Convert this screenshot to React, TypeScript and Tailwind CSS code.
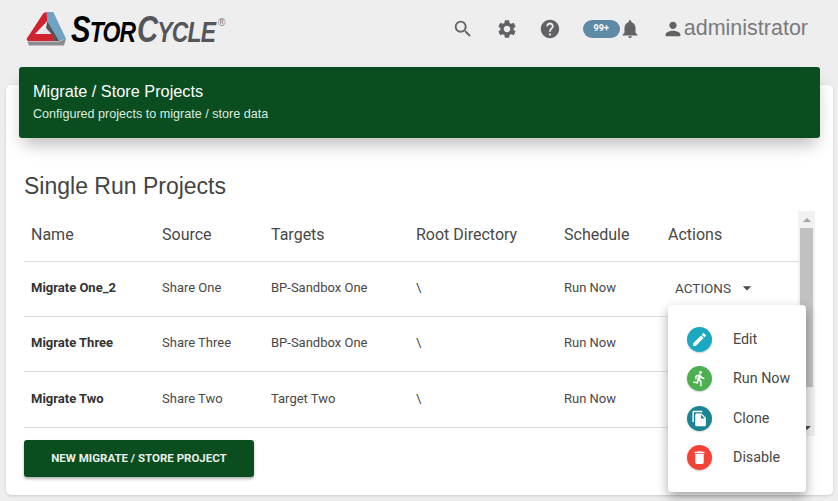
import {
  MdArrowDropDown,
  MdDelete,
  MdDirectionsRun,
  MdEdit,
  MdFileCopy,
  MdHelp,
  MdNotifications,
  MdPerson,
  MdSearch,
  MdSettings,
} from "react-icons/md";

const COLS = "grid grid-cols-[131px_109px_145px_148px_104px_1fr] items-center pl-[7px]";

const ROWS = [
  { name: "Migrate One_2", source: "Share One", target: "BP-Sandbox One", h: "h-[55px]" },
  { name: "Migrate Three", source: "Share Three", target: "BP-Sandbox One", h: "h-[55px]" },
  { name: "Migrate Two", source: "Share Two", target: "Target Two", h: "h-[56px]" },
];

const MENU = [
  { label: "Edit", icon: MdEdit, bg: "bg-[#1ba9c1]" },
  { label: "Run Now", icon: MdDirectionsRun, bg: "bg-[#4caf50]" },
  { label: "Clone", icon: MdFileCopy, bg: "bg-[#1b8494]" },
  { label: "Disable", icon: MdDelete, bg: "bg-[#f44336]" },
];

function Logo() {
  return (
    <div className="flex items-center">
      <svg width="42" height="36" viewBox="0 0 42 36" className="shrink-0">
        <path d="M20.7 1 L27.3 1 L40 27.7 L33.3 30 L21.3 10 Z" fill="#6fa3c4" />
        <path d="M21.3 10 L33.3 30 L28 30 L20 17 Z" fill="#55555a" />
        <path d="M20 17 L25.5 23 L14 23 Z" fill="#e4e4e4" />
        <path d="M17.5 2 L20.7 1 L21.3 10 L9 23 L26 23 L28 30 L2 30 L0.5 28 Z" fill="#d1232f" />
        <path d="M0.5 28 L3 34.5 L38 34.5 L40 27.7 L33.3 30.5 L2 30.5 Z" fill="#8b8b8f" />
      </svg>
      <div className="ml-[3px] w-[147px]">
        <span className="flex origin-left scale-x-[0.79] items-baseline font-bold italic leading-none tracking-[-1px] [font-family:'Liberation_Sans',sans-serif] whitespace-nowrap">
          <span className="text-[37px] text-black">S</span>
          <span className="text-[29px] text-black">TOR</span>
          <span className="ml-[2px] text-[37px] text-[#55565a]">C</span>
          <span className="text-[29px] text-[#55565a]">YCLE</span>
        </span>
      </div>
      <span className="mb-[14px] text-[10px] text-[#777] [font-family:'Liberation_Sans',sans-serif]">®</span>
    </div>
  );
}

function Header() {
  return (
    <div className="flex h-[67px] items-center pl-[26px] pr-[30px] pb-[9px] text-[#616166]">
      <Logo />
      <div className="ml-auto flex items-center">
        <MdSearch size={22} />
        <MdSettings size={22} className="ml-[22px]" />
        <MdHelp size={22} className="ml-[21px]" />
        <span className="ml-[22px] flex h-[18px] w-[37px] items-center justify-center rounded-full bg-[#5f8aa6] text-[9px] font-bold text-white">
          99+
        </span>
        <MdNotifications size={22} className="-mx-px" />
        <MdPerson size={22} className="ml-[22px]" />
        <span className="text-[21.5px] leading-none text-[#7a7a7e] [font-family:'Liberation_Sans',sans-serif]">administrator</span>
      </div>
    </div>
  );
}

export default function App() {
  return (
    <div className="h-[501px] w-[838px] overflow-hidden bg-[#eeeeee] font-['Roboto',sans-serif]">
      <Header />
      <div className="relative mx-[6px] mt-[18px] flex h-[410px] w-[827px] flex-col rounded-[5px] bg-white shadow-[0_1px_3px_rgba(0,0,0,0.15)]">
        <div className="relative z-10 mx-[13px] -mt-[18px] h-[71px] rounded-[3px] bg-[#0a4d1f] px-[14px] pt-[14px] shadow-[0_10px_16px_-4px_rgba(0,0,0,0.28)]">
          <div className="text-[16.3px] leading-[21px] text-white [font-family:'Liberation_Sans',sans-serif]">Migrate / Store Projects</div>
          <div className="mt-[4px] text-[12.6px] leading-[16px] text-[#dcebe0] [font-family:'Liberation_Sans',sans-serif]">Configured projects to migrate / store data</div>
        </div>
        <div className="px-[18px]">
          <h1 className="mt-[33px] text-[23px] leading-[30px] text-[#444] [font-family:'Liberation_Sans',sans-serif]">Single Run Projects</h1>
          <div className="mt-[10px] flex items-start">
            <div className="-mt-[4px] w-[774px]">
              <div className={`${COLS} h-[55px] border-b border-[#dddddd] pt-[2px] text-[16px] text-[#484848]`}>
                <span>Name</span>
                <span>Source</span>
                <span>Targets</span>
                <span>Root Directory</span>
                <span>Schedule</span>
                <span>Actions</span>
              </div>
              {ROWS.map((r, i) => (
                <div key={r.name} className={`${COLS} ${r.h} border-b border-[#dddddd] pb-[2px] text-[13px] text-[#484848]`}>
                  <span className="font-bold text-[#333]">{r.name}</span>
                  <span>{r.source}</span>
                  <span>{r.target}</span>
                  <span>\</span>
                  <span>Run Now</span>
                  {i === 0 ? (
                    <span className="ml-[7px] flex items-center text-[13.5px]">
                      ACTIONS
                      <MdArrowDropDown size={20} className="ml-[6px]" />
                    </span>
                  ) : (
                    <span />
                  )}
                </div>
              ))}
            </div>
            <div className="flex h-[225px] w-[17px] flex-col bg-[#f1f1f1]">
              <div className="flex h-[17px] items-center justify-center">
                <div className="h-0 w-0 border-x-[4px] border-b-[4px] border-x-transparent border-b-[#a3a3a3]" />
              </div>
              <div className="mx-[2px] h-[159px] bg-[#c1c1c1]" />
              <div className="mt-auto flex h-[17px] items-center justify-center">
                <div className="h-0 w-0 border-x-[4px] border-t-[4px] border-x-transparent border-t-[#505050]" />
              </div>
            </div>
          </div>
          <button className="mt-[4px] block h-[37px] w-[230px] rounded-[3px] bg-[#0a4d1f] text-[11.5px] font-bold text-[#e8f0ea] shadow-[0_2px_3px_rgba(0,0,0,0.3)]">
            NEW MIGRATE / STORE PROJECT
          </button>
        </div>
        <div className="absolute left-[662px] top-[220px] z-20 h-[187px] w-[138px] rounded-[4px] bg-white pl-[19px] pt-[22px] shadow-[0_5px_12px_rgba(0,0,0,0.35)]">
          {MENU.map((m) => {
            const Icon = m.icon;
            return (
              <div key={m.label} className="flex h-[39.4px] items-start">
                <span className={`flex h-[25px] w-[25px] items-center justify-center rounded-full text-white shadow-[0_1px_2px_rgba(0,0,0,0.2)] ${m.bg}`}>
                  <Icon size={17} />
                </span>
                <span className="ml-[21px] text-[14.3px] leading-[24px] text-[#484848]">{m.label}</span>
              </div>
            );
          })}
        </div>
      </div>
    </div>
  );
}
